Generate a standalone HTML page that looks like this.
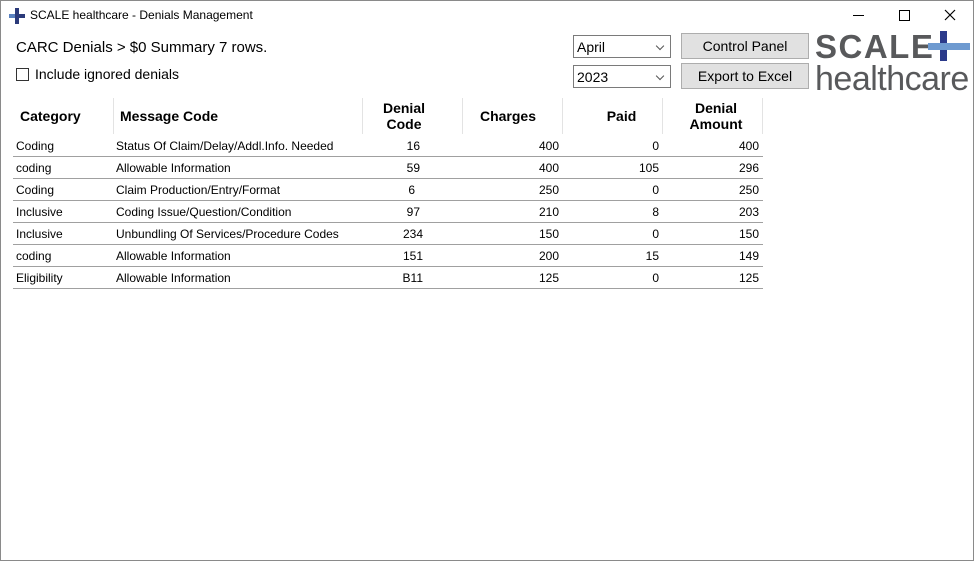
<!DOCTYPE html>
<html><head><style>
body{margin:0;width:974px;height:561px;overflow:hidden;background:#fff;font-family:"Liberation Sans",Arial,sans-serif;position:relative}
.a{position:absolute;white-space:nowrap}
.win{position:absolute;left:0;top:0;width:972px;height:559px;border:1px solid #8a8a8a}
.sel{position:absolute;height:23px;border:1px solid #7a7a7a;font-size:14px;line-height:23px;padding-left:3px;box-sizing:border-box;width:98px}
.sel:after{content:"";position:absolute;right:7px;top:7px;width:5px;height:5px;border-right:1px solid #555;border-bottom:1px solid #555;transform:rotate(45deg)}
.btn{position:absolute;width:128px;height:26px;background:#e1e1e1;border:1px solid #adadad;box-sizing:border-box;font-size:14px;text-align:center;line-height:24px}
.h{position:absolute;font-weight:bold;font-size:14px;text-align:center;line-height:16px}
.vs{position:absolute;top:98px;height:36px;width:1px;background:#e3e3e3}
.row{position:absolute;left:13px;width:750px;height:22px;border-bottom:1px solid #a0a0a0;font-size:12px;line-height:25px}
.row span{position:absolute}
.r{text-align:right}
</style></head><body>
<div class="win"></div>
<svg class="a" style="left:9px;top:8px" width="16" height="16"><rect x="6" y="0" width="4" height="16" fill="#2b3a7a"/><rect x="0" y="6" width="16" height="4" fill="#2b3a7a"/><rect x="0" y="6" width="6" height="4" fill="#5a82c0"/></svg>
<div class="a" style="left:30px;top:8px;font-size:12px">SCALE healthcare - Denials Management</div>
<div class="a" style="left:853px;top:15px;width:11px;height:1px;background:#000"></div>
<div class="a" style="left:899px;top:10px;width:9px;height:9px;border:1px solid #000"></div>
<svg class="a" style="left:944px;top:9px" width="12" height="12"><path d="M1 1L11 11M11 1L1 11" stroke="#000" stroke-width="1.2"/></svg>
<div class="a" style="left:16px;top:39px;font-size:15px">CARC Denials &gt; $0 Summary 7 rows.</div>
<div class="a" style="left:16px;top:68px;width:11px;height:11px;border:1px solid #333"></div>
<div class="a" style="left:35px;top:66px;font-size:14px">Include ignored denials</div>
<div class="sel" style="left:573px;top:35px">April</div>
<div class="sel" style="left:573px;top:65px">2023</div>
<div class="btn" style="left:681px;top:33px">Control Panel</div>
<div class="btn" style="left:681px;top:63px">Export to Excel</div>
<div class="a" style="left:815px;top:28px;font-size:33px;font-weight:bold;color:#58595b;letter-spacing:1.5px;line-height:38px">SCALE</div>
<div class="a" style="left:940px;top:31px;width:7px;height:30px;background:#2b3a8a"></div>
<div class="a" style="left:928px;top:43px;width:42px;height:7px;background:#6e9ad0"></div>
<div class="a" style="left:815px;top:59px;font-size:34px;color:#58595b;line-height:40px;letter-spacing:-0.5px">healthcare</div>
<div class="h" style="left:20px;top:108px">Category</div>
<div class="h" style="left:120px;top:108px">Message Code</div>
<div class="h" style="left:363px;top:100px;width:82px">Denial<br>Code</div>
<div class="h" style="left:463px;top:108px;width:90px">Charges</div>
<div class="h" style="left:563px;top:108px;width:117px">Paid</div>
<div class="h" style="left:663px;top:100px;width:106px">Denial<br>Amount</div>
<div class="vs" style="left:113px"></div><div class="vs" style="left:362px"></div><div class="vs" style="left:462px"></div><div class="vs" style="left:562px"></div><div class="vs" style="left:662px"></div><div class="vs" style="left:762px"></div>
<div class="row" style="top:134px"><span style="left:3px">Coding</span><span style="left:103px">Status Of Claim/Delay/Addl.Info. Needed</span><span style="left:350px;width:57px" class="r">16</span><span style="left:450px;width:96px" class="r">400</span><span style="left:550px;width:96px" class="r">0</span><span style="left:650px;width:96px" class="r">400</span></div>
<div class="row" style="top:156px"><span style="left:3px">coding</span><span style="left:103px">Allowable Information</span><span style="left:350px;width:57px" class="r">59</span><span style="left:450px;width:96px" class="r">400</span><span style="left:550px;width:96px" class="r">105</span><span style="left:650px;width:96px" class="r">296</span></div>
<div class="row" style="top:178px"><span style="left:3px">Coding</span><span style="left:103px">Claim Production/Entry/Format</span><span style="left:350px;width:52px" class="r">6</span><span style="left:450px;width:96px" class="r">250</span><span style="left:550px;width:96px" class="r">0</span><span style="left:650px;width:96px" class="r">250</span></div>
<div class="row" style="top:200px"><span style="left:3px">Inclusive</span><span style="left:103px">Coding Issue/Question/Condition</span><span style="left:350px;width:57px" class="r">97</span><span style="left:450px;width:96px" class="r">210</span><span style="left:550px;width:96px" class="r">8</span><span style="left:650px;width:96px" class="r">203</span></div>
<div class="row" style="top:222px"><span style="left:3px">Inclusive</span><span style="left:103px">Unbundling Of Services/Procedure Codes</span><span style="left:350px;width:60px" class="r">234</span><span style="left:450px;width:96px" class="r">150</span><span style="left:550px;width:96px" class="r">0</span><span style="left:650px;width:96px" class="r">150</span></div>
<div class="row" style="top:244px"><span style="left:3px">coding</span><span style="left:103px">Allowable Information</span><span style="left:350px;width:60px" class="r">151</span><span style="left:450px;width:96px" class="r">200</span><span style="left:550px;width:96px" class="r">15</span><span style="left:650px;width:96px" class="r">149</span></div>
<div class="row" style="top:266px"><span style="left:3px">Eligibility</span><span style="left:103px">Allowable Information</span><span style="left:350px;width:60px" class="r">B11</span><span style="left:450px;width:96px" class="r">125</span><span style="left:550px;width:96px" class="r">0</span><span style="left:650px;width:96px" class="r">125</span></div>
</body></html>
